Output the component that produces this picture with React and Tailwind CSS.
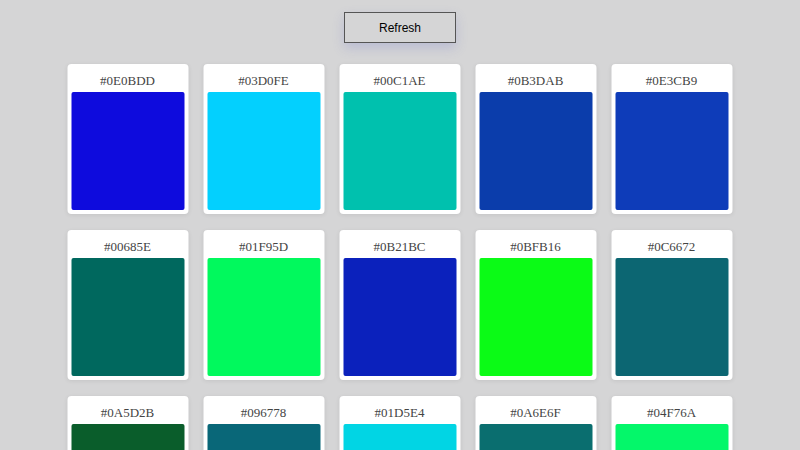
import React from 'react';

const colors = [
  '#0E0BDD', '#03D0FE', '#00C1AE', '#0B3DAB', '#0E3CB9',
  '#00685E', '#01F95D', '#0B21BC', '#0BFB16', '#0C6672',
  '#0A5D2B', '#096778', '#01D5E4', '#0A6E6F', '#04F76A',
];

function ColorCard({ hex }) {
  return (
    <div className="w-[121px] h-[150px] bg-white rounded-[4px] shadow-[0_1px_4px_rgba(0,0,0,0.08)] px-1 pb-1 flex flex-col">
      <div className="h-[28px] pt-[9px] text-center leading-[16px] text-[13px] text-[#444] font-['Liberation_Serif',serif]">
        {hex}
      </div>
      <div className="flex-1 rounded-[2px]" style={{ backgroundColor: hex }} />
    </div>
  );
}

export default function App() {
  return (
    <div className="min-h-screen bg-[#d5d5d6] flex flex-col items-center pt-3">
      <button className="w-[112px] h-[31px] border border-[#555] bg-[#d5d5d6] text-[12px] text-black font-['Liberation_Sans',sans-serif] shadow-[0_5px_12px_rgba(90,100,200,0.22)]">
        Refresh
      </button>
      <div className="grid grid-cols-5 gap-x-[15px] gap-y-[16px] mt-[21px] -translate-x-[0.5px]">
        {colors.map((c) => (
          <ColorCard key={c} hex={c} />
        ))}
      </div>
    </div>
  );
}
